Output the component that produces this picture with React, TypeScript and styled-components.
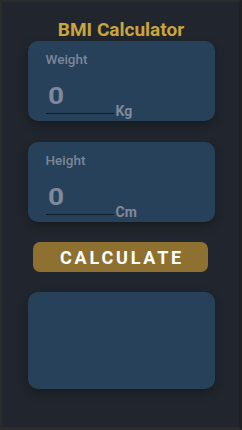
import React from 'react';
import styled, { createGlobalStyle } from 'styled-components';

const GlobalStyle = createGlobalStyle`
  html, body {
    margin: 0;
    padding: 0;
    background: #2a2b2c;
  }
  body {
    font-family: Roboto, 'Liberation Sans', sans-serif;
  }
`;

const Screen = styled.div`
  box-sizing: border-box;
  width: 242px;
  height: 430px;
  border-left: 2px solid #2b2c2d;
  border-top: 2px solid #2b2c2d;
  border-right: 3px solid #1e2024;
  border-bottom: 3px solid #2b2c2d;
  background: #21262e;
  display: flex;
  flex-direction: column;
  align-items: center;
  padding-top: 17px;
`;

const Title = styled.h1`
  margin: 0 0 0 1px;
  font-size: 19px;
  font-weight: 700;
  color: #caa43f;
  line-height: 22px;
  height: 22px;
`;

const Card = styled.div<{ tall?: boolean }>`
  box-sizing: border-box;
  width: 187px;
  height: ${({ tall }) => (tall ? '97px' : '80px')};
  background: #27415a;
  border-radius: 10px;
  box-shadow: 0 4px 10px rgba(0, 0, 0, 0.3);
  padding: 10px 18px 0;
  display: flex;
  flex-direction: column;
  margin-bottom: 21px;
  margin-left: 1px;
`;

const Label = styled.div`
  font-size: 13.5px;
  font-weight: 500;
  color: #7b8699;
  line-height: 16px;
`;

const InputRow = styled.div`
  display: flex;
  align-items: flex-end;
  margin-top: 19px;
`;

const Field = styled.div`
  width: 66px;
  border-bottom: 1px solid #101c2a;
  padding-left: 2px;
  height: 27px;
`;

const Digit = styled.span`
  display: inline-block;
  font-size: 23px;
  font-weight: 700;
  color: #7f899b;
  line-height: 22px;
  transform: scaleX(1.22);
  transform-origin: left center;
`;

const Unit = styled.span`
  font-size: 14px;
  font-weight: 700;
  color: #7f899b;
  line-height: 14px;
  margin-left: 2px;
  margin-bottom: -4px;
`;

const Button = styled.button`
  width: 175px;
  height: 30px;
  border: none;
  border-radius: 7px;
  background: #8e7130;
  color: #ffffff;
  font-family: Roboto, 'Liberation Sans', sans-serif;
  font-size: 18px;
  font-weight: 700;
  letter-spacing: 2.8px;
  margin: -1px 0 20px;
  padding: 0 0 0 3px;
`;

export default function App() {
  return (
    <>
      <GlobalStyle />
      <Screen>
        <Title>BMI Calculator</Title>
        <Card>
          <Label>Weight</Label>
          <InputRow>
            <Field>
              <Digit>0</Digit>
            </Field>
            <Unit>Kg</Unit>
          </InputRow>
        </Card>
        <Card>
          <Label>Height</Label>
          <InputRow>
            <Field>
              <Digit>0</Digit>
            </Field>
            <Unit>Cm</Unit>
          </InputRow>
        </Card>
        <Button>CALCULATE</Button>
        <Card tall />
      </Screen>
    </>
  );
}
